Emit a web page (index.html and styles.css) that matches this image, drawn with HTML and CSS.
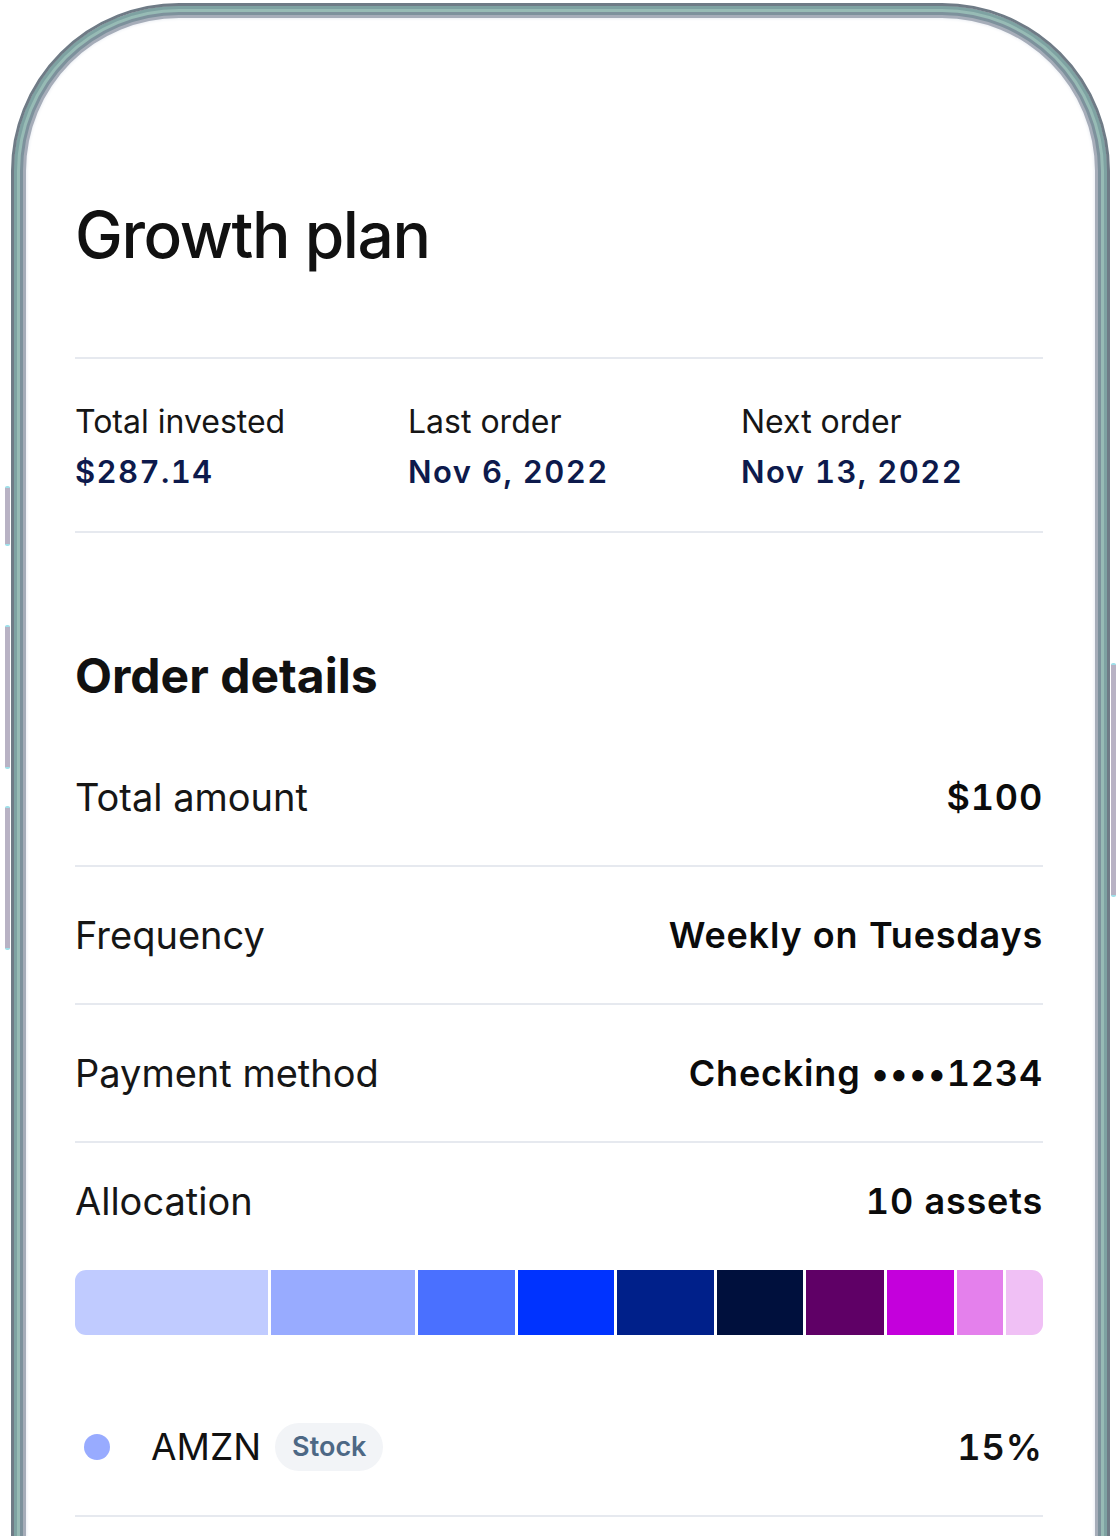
FILE: index.html
```html
<!DOCTYPE html>
<html lang="en">
<head>
<meta charset="UTF-8">
<meta name="viewport" content="width=device-width, initial-scale=1.0">
<title>Growth plan</title>
<link rel="stylesheet" href="styles.css">
</head>
<body>
<div class="phone">
    <span class="side-btn btn-mute"></span>
    <span class="side-btn btn-vol-up"></span>
    <span class="side-btn btn-vol-down"></span>
    <span class="side-btn btn-power"></span>

    <div class="screen">
        <h1>Growth plan</h1>

        <div class="stats">
            <div class="stat">
                <div class="stat-label">Total invested</div>
                <div class="stat-value">$287.14</div>
            </div>
            <div class="stat">
                <div class="stat-label">Last order</div>
                <div class="stat-value">Nov 6, 2022</div>
            </div>
            <div class="stat">
                <div class="stat-label">Next order</div>
                <div class="stat-value">Nov 13, 2022</div>
            </div>
        </div>

        <h2>Order details</h2>

        <div class="detail-row">
            <span class="detail-label">Total amount</span>
            <span class="detail-value">$100</span>
        </div>
        <div class="detail-row">
            <span class="detail-label">Frequency</span>
            <span class="detail-value">Weekly on Tuesdays</span>
        </div>
        <div class="detail-row">
            <span class="detail-label">Payment method</span>
            <span class="detail-value">Checking ••••1234</span>
        </div>

        <div class="allocation">
            <div class="allocation-head">
                <span class="detail-label">Allocation</span>
                <span class="detail-value">10 assets</span>
            </div>
            <div class="alloc-bar">
                <span class="seg c1" style="flex-grow: 20"></span>
                <span class="seg c2" style="flex-grow: 15"></span>
                <span class="seg c3" style="flex-grow: 10"></span>
                <span class="seg c4" style="flex-grow: 10"></span>
                <span class="seg c5" style="flex-grow: 10"></span>
                <span class="seg c6" style="flex-grow: 9"></span>
                <span class="seg c7" style="flex-grow: 8"></span>
                <span class="seg c8" style="flex-grow: 7"></span>
                <span class="seg c9" style="flex-grow: 4.8"></span>
                <span class="seg c10" style="flex-grow: 3.8"></span>
            </div>
        </div>

        <div class="asset-row">
            <span class="asset-dot c2"></span>
            <span class="asset-name">AMZN</span>
            <span class="badge">Stock</span>
            <span class="asset-pct">15%</span>
        </div>
    </div>
</div>
</body>
</html>
```

FILE: styles.css
```css
html, body {
    margin: 0;
    padding: 0;
    background-color: #fff;
    overflow: hidden;
    height: 1536px;
}
body {
    font-family: Inter, "Noto Sans", Arial, sans-serif;
    color: #111;
}

/* phone frame */
.phone {
    position: relative;
    margin: 3px 9px 0 11px;
    height: 1800px;
    border: 3px solid #6f7b86;
    border-radius: 168px;
    box-shadow:
        inset 0 0 0 3px #7ea2a2,
        inset 0 0 0 6px #97bbb5,
        inset 0 0 0 9px #7d919c,
        inset 0 0 0 12px #a6adb9,
        inset 0 0 3px 13px #eceff4;
}
.side-btn {
    position: absolute;
    width: 5px;
    background-color: #b8b2c4;
    border-radius: 2px;
    border-top: 2px solid #9fe0ea;
    border-bottom: 2px solid #9fe0ea;
}
.btn-mute { left: -9px; top: 480px; height: 56px; }
.btn-vol-up { left: -9px; top: 619px; height: 140px; }
.btn-vol-down { left: -9px; top: 800px; height: 140px; }
.btn-power { right: -9px; top: 657px; height: 230px; }

.screen {
    padding: 190px 64px 0 61px;
}

h1 {
    margin: 0;
    font-size: 64px;
    line-height: 78px;
    font-weight: 500;
    letter-spacing: -1.4px;
    padding-bottom: 83px;
    border-bottom: 2px solid #e6e9ef;
}

.stats {
    display: grid;
    grid-template-columns: 333px 333px 1fr;
    padding: 45px 0 41px 0;
    border-bottom: 2px solid #e6e9ef;
}
.stat-label {
    font-size: 32px;
    line-height: 36px;
    color: #161616;
}
.stat-value {
    margin-top: 14px;
    font-size: 31px;
    line-height: 36px;
    font-weight: 600;
    letter-spacing: 1.4px;
    font-variant-numeric: tabular-nums;
    color: #0d1a4c;
}

h2 {
    margin: 114px 0 24px 0;
    font-size: 48px;
    line-height: 58px;
    font-weight: 700;
}

.detail-row {
    display: flex;
    align-items: center;
    justify-content: space-between;
    height: 136px;
    border-bottom: 2px solid #e6e9ef;
}
.detail-label {
    font-size: 38px;
    line-height: 40px;
    color: #161616;
}
.detail-value {
    font-size: 36px;
    line-height: 40px;
    font-weight: 600;
    letter-spacing: 0.8px;
    font-variant-numeric: tabular-nums;
    color: #0b0b0b;
}

.allocation {
    padding-top: 38px;
}
.allocation-head {
    display: flex;
    justify-content: space-between;
    align-items: center;
}
.alloc-bar {
    display: flex;
    gap: 3px;
    height: 65px;
    margin-top: 49px;
    border-radius: 11px;
    overflow: hidden;
}
.seg {
    flex-basis: 0;
}
.c1 { background-color: #c0cbff; }
.c2 { background-color: #98abff; }
.c3 { background-color: #4a70ff; }
.c4 { background-color: #0033ff; }
.c5 { background-color: #00208a; }
.c6 { background-color: #00103d; }
.c7 { background-color: #5f0066; }
.c8 { background-color: #c400dc; }
.c9 { background-color: #e480ec; }
.c10 { background-color: #f0c0f5; }

.asset-row {
    display: flex;
    align-items: center;
    height: 136px;
    margin-top: 44px;
    border-bottom: 2px solid #e6e9ef;
}
.asset-dot {
    width: 26px;
    height: 26px;
    border-radius: 50%;
    margin-left: 9px;
}
.asset-name {
    margin-left: 41px;
    font-size: 37px;
    line-height: 40px;
}
.badge {
    margin-left: 14px;
    padding: 0 17px;
    height: 48px;
    line-height: 48px;
    border-radius: 24px;
    background-color: #f2f4f7;
    color: #4d6885;
    font-size: 27px;
    font-weight: 600;
}
.asset-pct {
    margin-left: auto;
    font-size: 36px;
    line-height: 40px;
    font-weight: 600;
    letter-spacing: 1px;
    font-variant-numeric: tabular-nums;
}
```
